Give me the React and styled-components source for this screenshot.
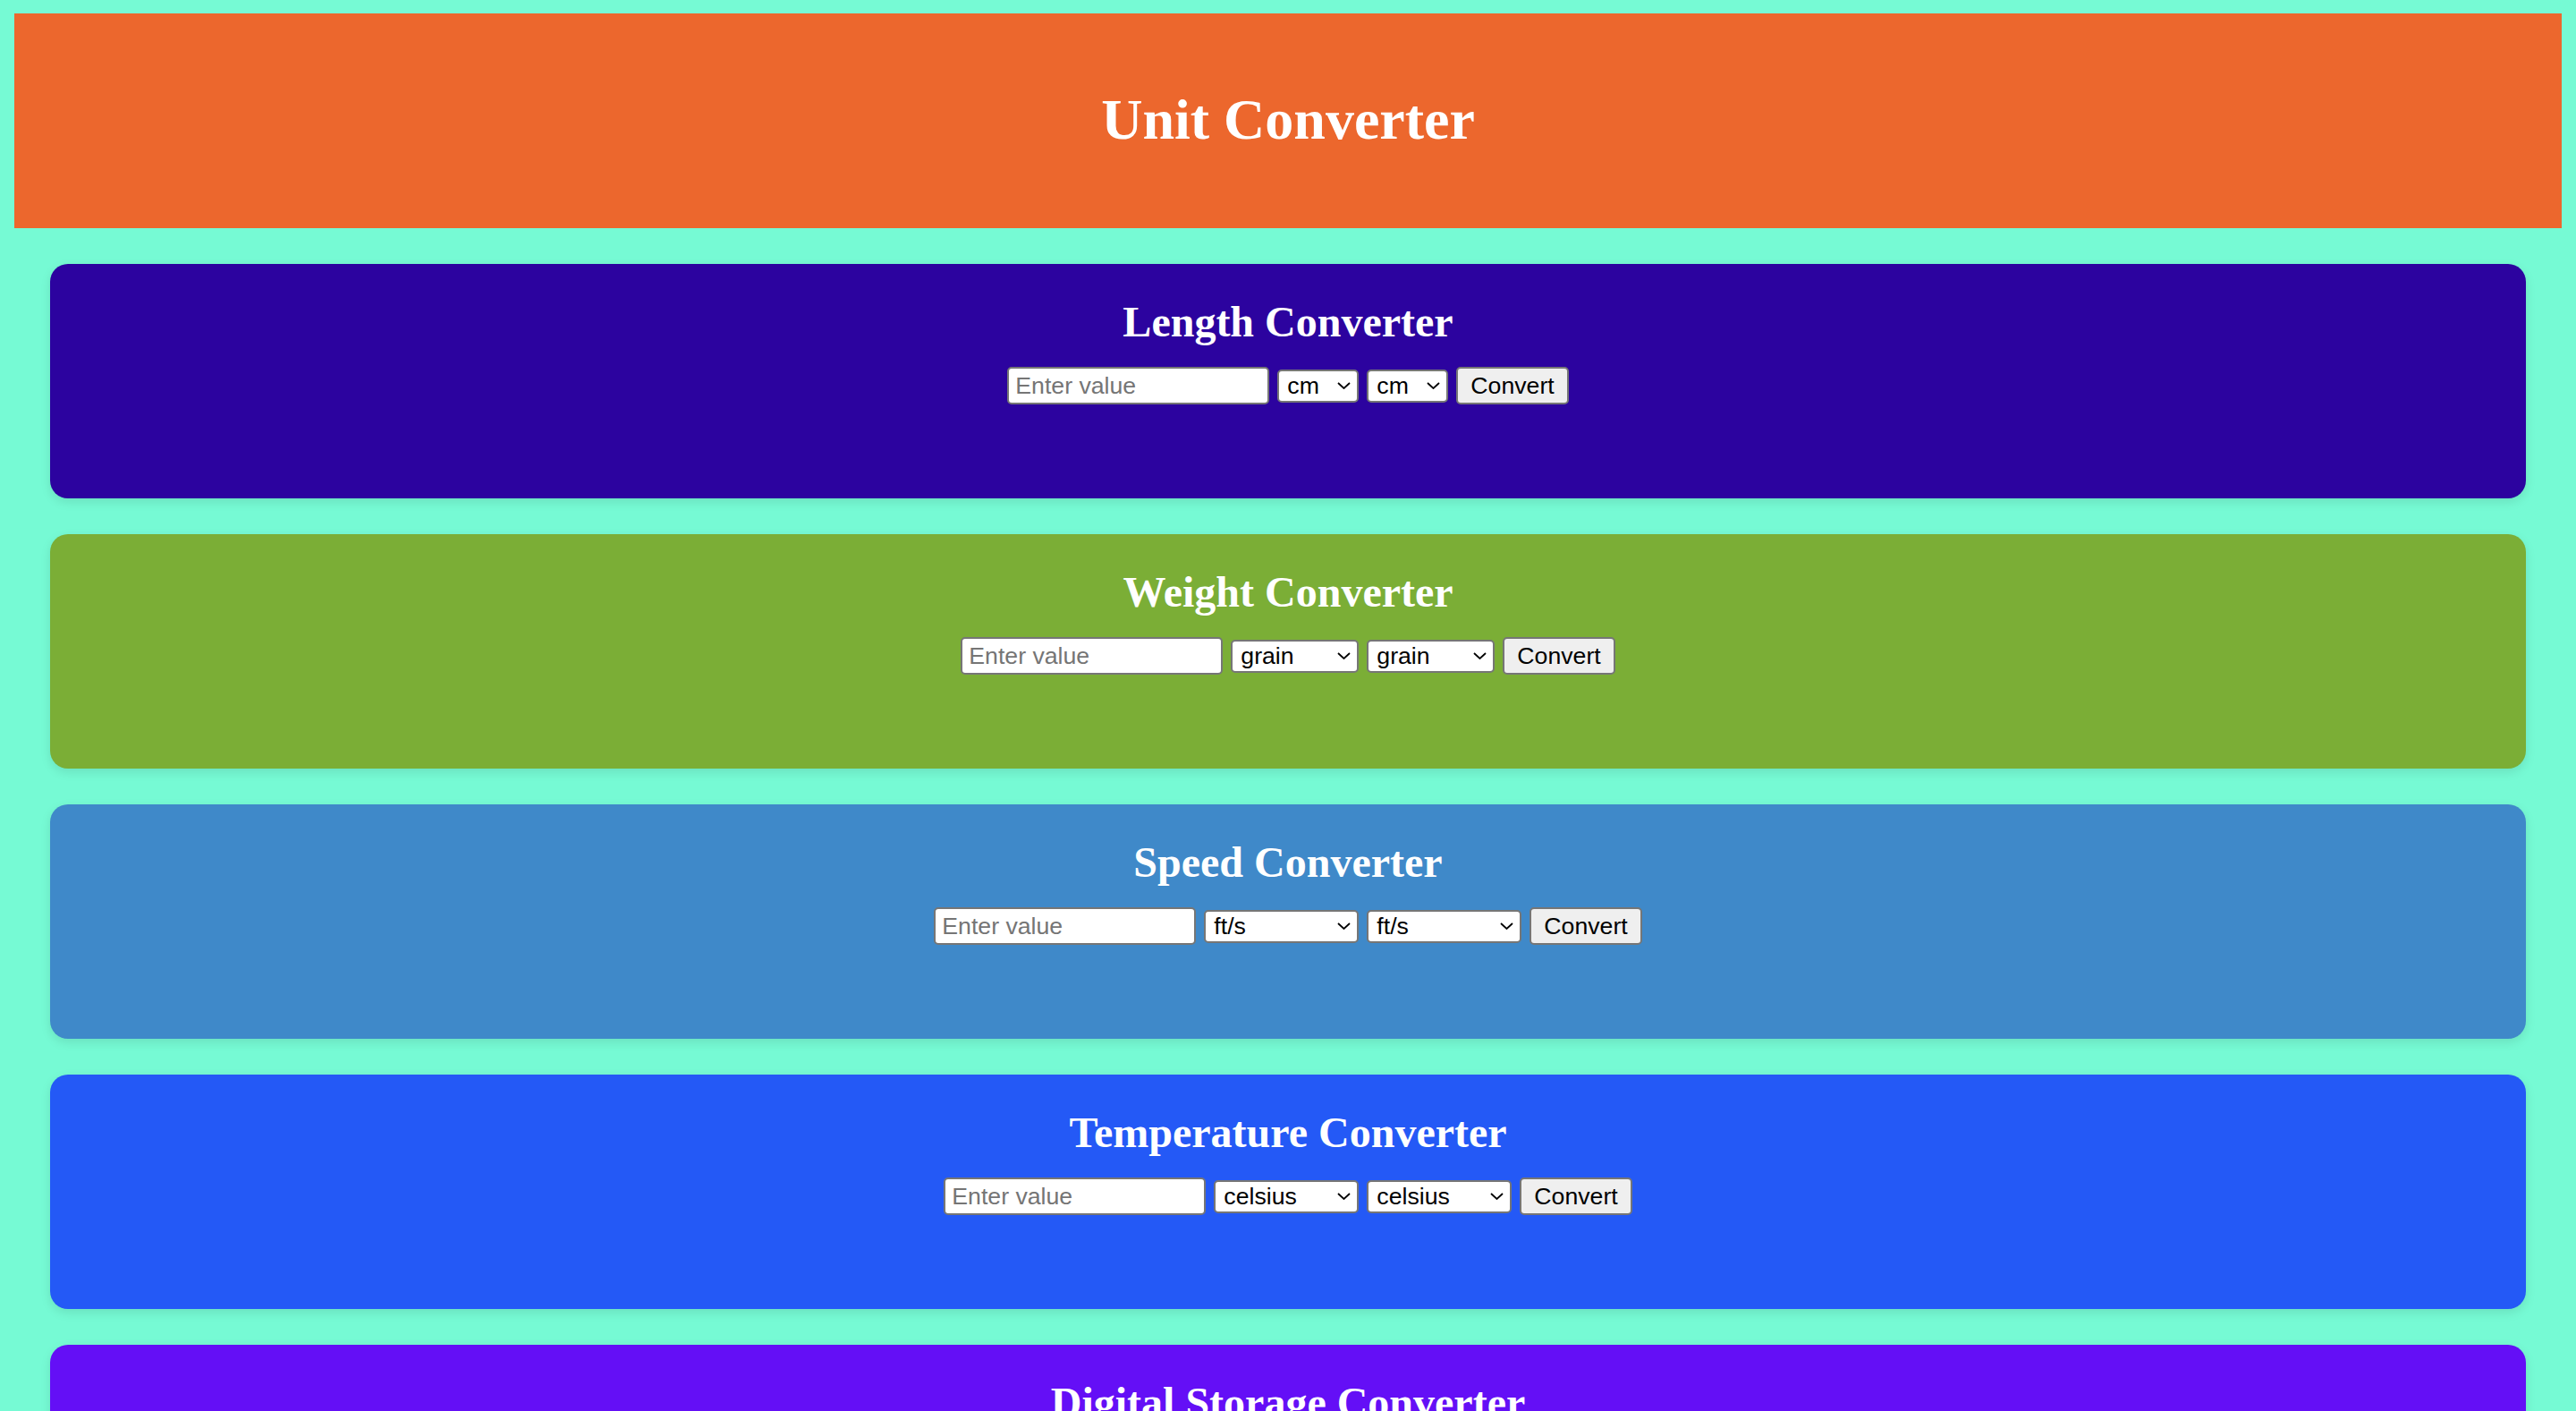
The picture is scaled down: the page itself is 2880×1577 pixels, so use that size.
import React, { useState } from 'react';
import styled, { createGlobalStyle } from 'styled-components';

const GlobalStyle = createGlobalStyle`
  html {
    scrollbar-width: none;
  }
  html::-webkit-scrollbar {
    display: none;
  }
  body {
    margin: 15px 16px;
    background-color: #76fad4;
    font-family: 'Liberation Serif', 'Times New Roman', serif;
  }
`;

const Header = styled.header`
  background-color: #ec672d;
  padding: 83px 0 86px;
  text-align: center;
`;

const Title = styled.h1`
  margin: 0;
  color: #fff;
  font-size: 64px;
  line-height: 71px;
  font-weight: bold;
`;

const CardList = styled.main`
  display: flex;
  flex-direction: column;
  gap: 40px;
  padding: 40px 40px 40px;
`;

const Card = styled.section`
  background-color: ${props => props.$color};
  border-radius: 20px;
  box-shadow: 0 4px 12px rgba(0, 0, 0, 0.1);
  padding: 0 0 105px;
  text-align: center;
`;

const CardTitle = styled.h2`
  margin: 38px 0 24px;
  color: #fff;
  font-size: 48px;
  line-height: 53px;
  font-weight: bold;
`;

const Row = styled.div`
  display: flex;
  justify-content: center;
  align-items: center;
  gap: 9px;
  font-family: 'Liberation Sans', Arial, sans-serif;
  font-size: 26.67px;
`;

const ValueInput = styled.input`
  box-sizing: border-box;
  width: 293px;
  height: 42px;
  margin: 0;
  padding: 0 7px;
  border: 2px solid #767676;
  border-radius: 5px;
  background: #fff;
  color: #000;
  font: inherit;
  outline: none;

  &::placeholder {
    color: #757575;
  }
`;

const SelectWrap = styled.span`
  position: relative;
  display: inline-flex;
`;

const Select = styled.select`
  box-sizing: border-box;
  width: ${props => props.$width}px;
  height: 37px;
  margin: 0;
  padding: 0 30px 0 9px;
  border: 2px solid #767676;
  border-radius: 5px;
  background: #fff;
  color: #000;
  font: inherit;
  appearance: none;
  -webkit-appearance: none;
  outline: none;
`;

const Chevron = styled.svg`
  position: absolute;
  right: 9px;
  top: 50%;
  width: 15px;
  height: 8px;
  margin-top: -4px;
  pointer-events: none;
`;

const ConvertButton = styled.button`
  box-sizing: border-box;
  height: 42px;
  margin: 0;
  padding: 0 14px;
  border: 2px solid #767676;
  border-radius: 5px;
  background: #efefef;
  color: #000;
  font: inherit;
  cursor: pointer;
`;

const Result = styled.p`
  margin: 16px 0 0;
  color: #fff;
  font-size: 32px;

  &:empty {
    display: none;
  }
`;

const converters = [
  {
    name: 'Length',
    color: '#2c039f',
    width: 91,
    units: { cm: 0.01, m: 1, km: 1000, mm: 0.001, inch: 0.0254, foot: 0.3048, yard: 0.9144, mile: 1609.344 }
  },
  {
    name: 'Weight',
    color: '#7bae36',
    width: 143,
    units: { grain: 0.0000648, gram: 0.001, kilogram: 1, ounce: 0.02835, pound: 0.45359, ton: 1000 }
  },
  {
    name: 'Speed',
    color: '#3f89c9',
    width: 173,
    units: { 'ft/s': 0.3048, 'm/s': 1, 'km/h': 0.27778, mph: 0.44704, knot: 0.51444, 'miles/hour': 0.44704 }
  },
  {
    name: 'Temperature',
    color: '#2459f6',
    width: 162,
    units: { celsius: 'c', fahrenheit: 'f', kelvin: 'k' }
  },
  {
    name: 'Digital Storage',
    color: '#640ff6',
    width: 160,
    units: { bit: 0.125, byte: 1, kilobyte: 1024, megabyte: 1048576, gigabyte: 1073741824 }
  }
];

function toCelsius(v, unit) {
  if (unit === 'f') return ((v - 32) * 5) / 9;
  if (unit === 'k') return v - 273.15;
  return v;
}

function fromCelsius(v, unit) {
  if (unit === 'f') return (v * 9) / 5 + 32;
  if (unit === 'k') return v + 273.15;
  return v;
}

function UnitSelect({ width, units, value, onChange }) {
  return (
    <SelectWrap>
      <Select $width={width} value={value} onChange={e => onChange(e.target.value)}>
        {Object.keys(units).map(u => (
          <option key={u} value={u}>
            {u}
          </option>
        ))}
      </Select>
      <Chevron viewBox="0 0 15 8" fill="none">
        <path d="M1 1l6.5 6L14 1" stroke="#000" strokeWidth="1.8" />
      </Chevron>
    </SelectWrap>
  );
}

function Converter({ name, color, width, units }) {
  const first = Object.keys(units)[0];
  const [value, setValue] = useState('');
  const [from, setFrom] = useState(first);
  const [to, setTo] = useState(first);
  const [result, setResult] = useState('');

  const convert = () => {
    const v = parseFloat(value);
    if (isNaN(v)) {
      setResult('');
      return;
    }
    let out;
    if (typeof units[from] === 'string') {
      out = fromCelsius(toCelsius(v, units[from]), units[to]);
    } else {
      out = (v * units[from]) / units[to];
    }
    setResult(`${v} ${from} = ${+out.toFixed(4)} ${to}`);
  };

  return (
    <Card $color={color}>
      <CardTitle>{name} Converter</CardTitle>
      <Row>
        <ValueInput
          type="text"
          placeholder="Enter value"
          value={value}
          onChange={e => setValue(e.target.value)}
        />
        <UnitSelect width={width} units={units} value={from} onChange={setFrom} />
        <UnitSelect width={width} units={units} value={to} onChange={setTo} />
        <ConvertButton onClick={convert}>Convert</ConvertButton>
      </Row>
      <Result>{result}</Result>
    </Card>
  );
}

export default function App() {
  return (
    <>
      <GlobalStyle />
      <Header>
        <Title>Unit Converter</Title>
      </Header>
      <CardList>
        {converters.map(c => (
          <Converter key={c.name} {...c} />
        ))}
      </CardList>
    </>
  );
}
